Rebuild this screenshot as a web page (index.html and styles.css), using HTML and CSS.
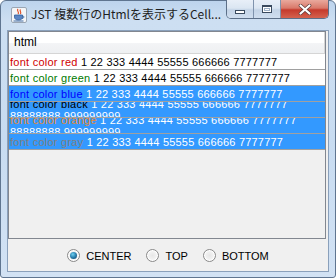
FILE: index.html
```html
<!DOCTYPE html>
<html>
<head>
<meta charset="utf-8">
<title>JST</title>
<link rel="stylesheet" href="styles.css">
</head>
<body>
<div class="window">
  <div class="titlebar">
    <svg class="app-icon" width="16" height="16" viewBox="0 0 16 16">
      <rect x="0.5" y="0.5" width="15" height="15" rx="1.5" fill="#f4f6f8" stroke="#9aa6b4"/>
      <path d="M7 2 C5 4 9 5 7 7 M9.5 2.5 C8 4 11 5 9.3 7" fill="none" stroke="#e0522a" stroke-width="1.2"/>
      <path d="M3.5 8 H11.5 V10 C11.5 12 10 13 7.5 13 C5 13 3.5 12 3.5 10 Z" fill="#5b86c4" stroke="#2f5d9c" stroke-width="0.8"/>
      <path d="M11.5 9 C13.5 9 13.5 11 11 11.5" fill="none" stroke="#2f5d9c" stroke-width="0.9"/>
      <path d="M2.5 14 H12.5" stroke="#2f5d9c" stroke-width="0.9"/>
    </svg>
    <span class="title">JST 複数行のHtmlを表示するCell...</span>
    <div class="controls">
      <div class="btn btn-min"><span class="glyph-min"></span></div>
      <div class="btn btn-max"><span class="glyph-max"></span></div>
      <div class="btn btn-close">
        <svg width="14" height="11" viewBox="0 0 14 11">
          <path d="M2.5 1.5 L11.5 9.5 M11.5 1.5 L2.5 9.5" stroke="#5a3b3b" stroke-width="3.6" stroke-linecap="round"/>
          <path d="M2.5 1.5 L11.5 9.5 M11.5 1.5 L2.5 9.5" stroke="#ffffff" stroke-width="2.2" stroke-linecap="round"/>
        </svg>
      </div>
    </div>
  </div>
  <div class="content">
    <div class="scroll">
      <div class="header">html</div>
      <div class="row"><div class="cell"><span class="lbl c-red">font color red</span> 1 22 333 4444 55555 666666 7777777</div></div>
      <div class="row"><div class="cell"><span class="lbl c-green">font color green</span> 1 22 333 4444 55555 666666 7777777</div></div>
      <div class="row sel"><div class="cell"><span class="lbl c-blue">font color blue</span> 1 22 333 4444 55555 666666 7777777</div></div>
      <div class="row sel"><div class="cell"><span class="lbl c-black">font color black</span> 1 22 333 4444 55555 666666 7777777<br>88888888 999999999</div></div>
      <div class="row sel"><div class="cell"><span class="lbl c-orange">font color orange</span> 1 22 333 4444 55555 666666 7777777<br>88888888 999999999</div></div>
      <div class="row sel"><div class="cell"><span class="lbl c-gray">font color gray</span> 1 22 333 4444 55555 666666 7777777</div></div>
    </div>
    <div class="radios">
      <label class="radio"><span class="dot on"></span>CENTER</label>
      <label class="radio"><span class="dot"></span>TOP</label>
      <label class="radio"><span class="dot"></span>BOTTOM</label>
    </div>
  </div>
</div>
</body>
</html>
```

FILE: styles.css
```css
* { box-sizing: border-box; }
html, body { margin: 0; padding: 0; }
body {
  width: 336px;
  height: 278px;
  overflow: hidden;
  background: #ffffff;
  font-family: "Liberation Sans", Arial, sans-serif;
}
.window {
  width: 336px;
  height: 278px;
  border: 1px solid #5f7590;
  border-radius: 6px 6px 3px 3px;
  background: linear-gradient(to bottom, #bdd4ed 0, #cddff2 20px, #c8dcf1 50%, #d2e2f4 100%);
  display: flex;
  flex-direction: column;
}
.titlebar {
  height: 29px;
  display: flex;
  align-items: flex-start;
  padding: 0 6px 0 10px;
}
.app-icon {
  margin-top: 6px;
  flex: none;
}
.title {
  margin: 5px 0 0 4px;
  font-family: "Noto Sans CJK JP", "Noto Sans", sans-serif;
  font-size: 12px;
  line-height: 16px;
  color: #1e1e1e;
  white-space: nowrap;
}
.controls {
  margin-left: auto;
  display: flex;
  height: 19px;
  margin-top: -1px;
  border: 1px solid #5c6f88;
  border-top: none;
  border-radius: 0 0 5px 5px;
  overflow: hidden;
}
.btn {
  height: 100%;
  display: flex;
  align-items: center;
  justify-content: center;
}
.btn-min, .btn-max {
  width: 27px;
  background: linear-gradient(to bottom, #e8eff8 0, #dbe6f2 45%, #c4d4e7 55%, #d0deef 100%);
  border-right: 1px solid #7f93ad;
}
.btn-close {
  width: 47px;
  background: linear-gradient(to bottom, #e9a99d 0, #d9796a 45%, #c53a2c 55%, #d5624e 100%);
}
.glyph-min {
  width: 10px;
  height: 4px;
  margin-top: 5px;
  border: 1px solid #3a4a5e;
  background: #ffffff;
}
.glyph-max {
  width: 10px;
  height: 8px;
  border: 1px solid #3a4a5e;
  border-top-width: 2px;
  background: #ffffff;
  box-shadow: inset 0 0 0 1px #ffffff, inset 0 0 0 2px #9db0c6;
}
.content {
  margin: 0 6px 0 6px;
  height: 242px;
  border: 1px solid #8aa0bb;
  background: #f0f0f0;
  display: flex;
  flex-direction: column;
}
.scroll {
  width: 318px;
  height: 208px;
  border: 1px solid #828790;
  background: #f0f0f0;
  overflow: hidden;
}
.header {
  height: 22px;
  padding-left: 5px;
  font-size: 12px;
  line-height: 21px;
  color: #000;
  background: linear-gradient(to bottom, #ffffff 0, #ffffff 50%, #f3f4f6 55%, #eef0f2 100%);
  border-bottom: 1px solid #d5d5d5;
  border-right: 1px solid #d5d5d5;
}
.row {
  height: 16px;
  border-bottom: 1px solid #a0a0a0;
  background: #ffffff;
  color: #000000;
  display: flex;
  align-items: center;
  overflow: hidden;
}
.row.sel {
  background: #3399ff;
  color: #ffffff;
}
.cell {
  padding-left: 1px;
  font-size: 11px;
  line-height: 12px;
  letter-spacing: 0.2px;
  white-space: nowrap;
}
.lbl { letter-spacing: 0.25px; }
.c-red { color: #d00000; }
.c-green { color: #007a00; }
.c-blue { color: #0000ff; }
.c-black { color: #000000; }
.c-orange { color: #e88a30; }
.c-gray { color: #808080; }
.radios {
  flex: 1;
  display: flex;
  justify-content: center;
  align-items: center;
  gap: 15px;
  padding-top: 1px;
}
.radio {
  display: flex;
  align-items: center;
  gap: 6px;
  font-size: 11px;
  color: #000;
}
.dot {
  width: 13px;
  height: 13px;
  border-radius: 50%;
  border: 1px solid #8a8a8a;
  background: radial-gradient(circle at 50% 50%, #e6e6e6 0, #f4f4f4 60%, #dcdcdc 100%);
  box-shadow: inset 0 0 0 1px #ffffff;
  display: flex;
  align-items: center;
  justify-content: center;
}
.dot.on::after {
  content: "";
  width: 7px;
  height: 7px;
  border-radius: 50%;
  background: radial-gradient(circle at 40% 35%, #6fd0f0 0, #2a7fae 50%, #0f3f66 100%);
}
```
